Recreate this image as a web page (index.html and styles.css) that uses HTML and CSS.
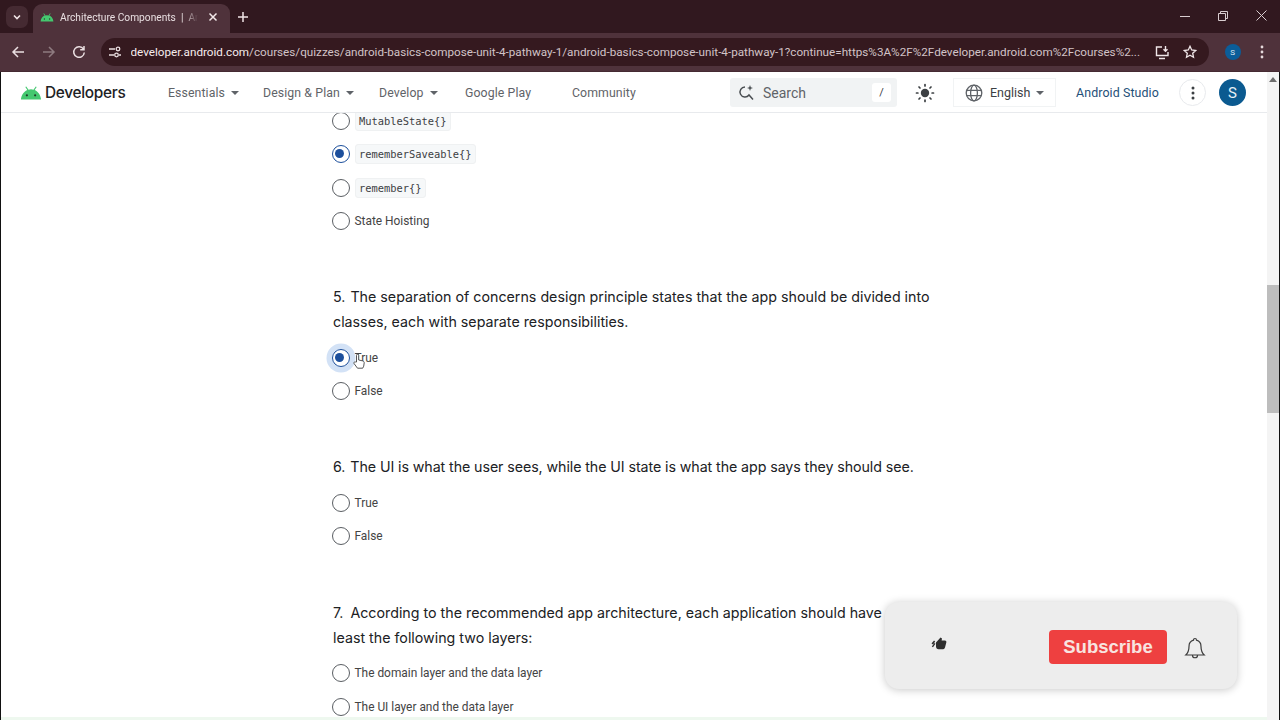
FILE: index.html
```html
<!DOCTYPE html>
<html lang="en">
<head>
<meta charset="utf-8">
<title>Architecture Components | Android Developers</title>
<link rel="stylesheet" href="styles.css">
</head>
<body>
<div class="tabstrip">
  <div class="tabsearch"><svg width="10" height="10" viewBox="0 0 10 10"><path d="M2 3.500 5 6.500 8 3.500" fill="none" stroke="#f0e4e6" stroke-width="1.600"/></svg></div>
  <div class="tab">
    <svg class="favicon" width="14" height="9" viewBox="0 0 24 15"><path d="M1 14.500C1.500 9 5 5.500 8 4.200L5.800 1l1-.6L9.300 4a8 8 0 0 1 5.400 0L17.200.4l1 .6L16 4.200C19 5.500 22.500 9 23 14.500Z" fill="#44c86f"/><circle cx="7.500" cy="10" r="1.200" fill="#2c3a30"/><circle cx="16.500" cy="10" r="1.200" fill="#2c3a30"/></svg>
    <span class="tabtitle">Architecture Components&nbsp; |&nbsp; An</span>
    <svg class="tabclose" width="10" height="10" viewBox="0 0 10 10"><path d="M1.500 1.500l7 7M8.500 1.500l-7 7" stroke="#f3e9ea" stroke-width="1.500"/></svg>
  </div>
  <svg class="newtab" width="12" height="12" viewBox="0 0 12 12"><path d="M6 1v10M1 6h10" stroke="#f0e4e6" stroke-width="1.500"/></svg>
  <div class="winctl">
    <svg width="10" height="10" viewBox="0 0 10 10"><path d="M0 5.500h10" stroke="#d9cdd0" stroke-width="1"/></svg>
    <svg width="10" height="10" viewBox="0 0 10 10"><path d="M.5 2.500h7v7h-7zM2.500 2.500V.5h7v7h-2" fill="none" stroke="#d9cdd0"/></svg>
    <svg width="11" height="11" viewBox="0 0 11 11"><path d="M.5.5l10 10M10.500.5l-10 10" stroke="#d9cdd0"/></svg>
  </div>
</div>
<div class="toolbar">
  <svg class="navicon" width="14" height="14" viewBox="0 0 14 14"><path d="M13 7H2M7 2 2 7l5 5" fill="none" stroke="#eadfe1" stroke-width="1.500"/></svg>
  <svg class="navicon" width="14" height="14" viewBox="0 0 14 14"><path d="M1 7h11M7 2l5 5-5 5" fill="none" stroke="#8f7b80" stroke-width="1.500"/></svg>
  <svg class="navicon" width="14" height="14" viewBox="0 0 14 14"><path d="M11.500 4.200A5.300 5.300 0 1 0 12.300 7.500M12 1v3.800H8.200" fill="none" stroke="#eadfe1" stroke-width="1.500"/></svg>
  <div class="omnibox">
    <svg class="tune" width="14" height="14" viewBox="0 0 14 14"><path d="M1 4h6M11 10h2M1 10h5" stroke="#eadfe1" stroke-width="1.300"/><circle cx="10" cy="4" r="1.800" fill="none" stroke="#eadfe1" stroke-width="1.300"/><circle cx="8.500" cy="10" r="1.800" fill="none" stroke="#eadfe1" stroke-width="1.300"/></svg>
    <span class="url"><span class="host">developer.android.com</span>/courses/quizzes/android-basics-compose-unit-4-pathway-1/android-basics-compose-unit-4-pathway-1?continue=https%3A%2F%2Fdeveloper.android.com%2Fcourses%2...</span>
    <svg class="omniicon" width="16" height="15" viewBox="0 0 16 15"><path d="M7 2H1.500v8.500h11.500V7M4 13.500h6" fill="none" stroke="#f0e6e8" stroke-width="1.400"/><path d="M10.500 1v5M8.500 4.200l2 2 2-2" fill="none" stroke="#f0e6e8" stroke-width="1.400"/></svg>
    <svg class="omniicon star" width="14" height="14" viewBox="0 0 14 14"><path d="M7 1.300l1.700 3.700 4 .5-3 2.700.8 4L7 10.200 3.500 12.200l.8-4-3-2.700 4-.5Z" fill="none" stroke="#f0e6e8" stroke-width="1.300"/></svg>
  </div>
  <div class="profile-mini">S</div>
  <svg class="kebab-mini" width="4" height="14" viewBox="0 0 4 14"><circle cx="2" cy="2" r="1.400" fill="#e6dadc"/><circle cx="2" cy="7" r="1.400" fill="#e6dadc"/><circle cx="2" cy="12" r="1.400" fill="#e6dadc"/></svg>
</div>
<div class="viewport">
  <div class="page">
    <header class="sitehead">
      <div class="brand">
        <svg width="22" height="14" viewBox="0 0 24 15"><path d="M1 14.500C1.500 9 5 5.500 8 4.200L5.800 1l1-.6L9.300 4a8 8 0 0 1 5.400 0L17.200.4l1 .6L16 4.200C19 5.500 22.500 9 23 14.500Z" fill="#44c86f"/><circle cx="7.500" cy="10" r="1.200" fill="#1f3a2a"/><circle cx="16.500" cy="10" r="1.200" fill="#1f3a2a"/></svg>
        <span class="brandname">Developers</span>
      </div>
      <nav class="nav">
        <span class="navitem w1">Essentials<i class="caret"></i></span>
        <span class="navitem w2">Design &amp; Plan<i class="caret"></i></span>
        <span class="navitem w3">Develop<i class="caret"></i></span>
        <span class="navitem w4">Google Play</span>
        <span class="navitem">Community</span>
      </nav>
      <div class="searchbox">
        <svg width="18" height="18" viewBox="0 0 18 18"><path d="M8 3a5 5 0 1 0 4 8l4 4.500" fill="none" stroke="#4a4e52" stroke-width="1.500"/><path d="M13 1l.8 2.200L16 4l-2.200.8L13 7l-.8-2.200L10 4l2.200-.8Z" fill="#4a4e52"/></svg>
        <span class="searchlabel">Search</span>
        <span class="slash">/</span>
      </div>
      <svg class="sun" width="20" height="20" viewBox="0 0 20 20"><circle cx="10" cy="10" r="4.200" fill="#3c4043"/><g stroke="#3c4043" stroke-width="1.700" stroke-linecap="round"><path d="M10 1.500v1.400M10 17.100v1.400M1.500 10h1.400M17.100 10h1.400M4 4l1 1M15 15l1 1M4 16l1-1M15 5l1-1"/></g></svg>
      <div class="lang">
        <svg width="18" height="18" viewBox="0 0 18 18"><g fill="none" stroke="#5f6368" stroke-width="1.300"><circle cx="9" cy="9" r="7.800"/><ellipse cx="9" cy="9" rx="3.400" ry="7.800"/><path d="M1.800 6.300h14.400M1.800 11.700h14.400"/></g></svg>
        <span>English</span><i class="caret"></i>
      </div>
      <span class="studio">Android Studio</span>
      <div class="morebtn"><svg width="4" height="14" viewBox="0 0 4 14"><circle cx="2" cy="2" r="1.500" fill="#3c4043"/><circle cx="2" cy="7" r="1.500" fill="#3c4043"/><circle cx="2" cy="12" r="1.500" fill="#3c4043"/></svg></div>
      <div class="avatar">S</div>
    </header>
    <main class="quiz">
      <div class="options first">
        <label class="opt"><span class="radio"></span><code>MutableState{}</code></label>
        <label class="opt"><span class="radio on"></span><code>rememberSaveable{}</code></label>
        <label class="opt"><span class="radio"></span><code>remember{}</code></label>
        <label class="opt"><span class="radio"></span>State Hoisting</label>
      </div>
      <section class="question">
        <p class="qtext"><span class="qnum">5.</span>The separation of concerns design principle states that the app should be divided into classes, each with separate responsibilities.</p>
        <div class="options">
          <label class="opt cursor-opt"><span class="radio on halo"></span>True
            <svg class="cursor" width="12" height="16" viewBox="0 0 12 16"><path d="M3.500 9V2.300a1.100 1.100 0 0 1 2.200 0V7l4 .9c1 .3 1.600 1 1.500 2l-.5 3.300-1 2H4.500L1 10.500c-.6-.9.8-2.200 1.600-1.500Z" fill="#fff" stroke="#444" stroke-width=".9"/></svg>
          </label>
          <label class="opt"><span class="radio"></span>False</label>
        </div>
      </section>
      <section class="question">
        <p class="qtext tight"><span class="qnum">6.</span>The UI is what the user sees, while the UI state is what the app says they should see.</p>
        <div class="options">
          <label class="opt"><span class="radio"></span>True</label>
          <label class="opt"><span class="radio"></span>False</label>
        </div>
      </section>
      <section class="question">
        <p class="qtext"><span class="qnum wide">7.</span>According to the recommended app architecture, each application should have at<br>least the following two layers:</p>
        <div class="options">
          <label class="opt"><span class="radio"></span>The domain layer and the data layer</label>
          <label class="opt"><span class="radio"></span>The UI layer and the data layer</label>
        </div>
      </section>
    </main>
    <div class="bottomtint"></div>
  </div>
  <aside class="scrollbar">
    <svg class="uparrow" width="8" height="5" viewBox="0 0 8 5"><path d="M4 0l4 5H0Z" fill="#6d6d6d"/></svg>
    <div class="thumb"></div>
  </aside>
</div>
<div class="subcard">
  <svg class="thumbicon" width="16" height="13" viewBox="0 0 16 13"><path d="M5 5.500 9.500.5l1.500 1-.4 2H14c1 0 1.700 1 1.300 2l-1.300 5c-.3.800-1 1.700-1.800 1.700H7.500C6 12.200 5 11 5 9.500Z" fill="#2e2e2e"/><path d="M.5 6.500 3 3.500l1.200 1L2 7.500ZM.8 9.500 3.500 6l1 .8L2 10.300Z" fill="#2e2e2e"/></svg>
  <span class="subscribe">Subscribe</span>
  <svg class="bell" width="22" height="24" viewBox="0 0 22 24"><path d="M11 1.500c.9 0 1.500.6 1.500 1.700 3 .8 4.500 3.200 4.500 6.300 0 4 .8 6.200 3.200 8.500H1.800C4.200 15.700 5 13.500 5 9.500c0-3.100 1.500-5.500 4.500-6.300 0-1.100.6-1.700 1.500-1.700Z M8.500 18.500c0 3 5 3 5 0" fill="none" stroke="#3c3c3c" stroke-width="1.200"/></svg>
</div>
</body>
</html>
```
FILE: styles.css
```css
* { box-sizing: border-box; }
html, body { margin: 0; height: 720px; overflow: hidden; }
body {
  width: 1280px;
  display: flex;
  flex-direction: column;
  position: relative;
  font-family: "Roboto", "Liberation Sans", sans-serif;
  background: #fff;
}
.tabstrip {
  height: 33px;
  flex: none;
  background: #31181f;
  display: flex;
  align-items: center;
  padding: 0 0 0 6px;
}
.tabsearch {
  width: 22px; height: 22px;
  border-radius: 7px;
  background: #452a32;
  display: flex; align-items: center; justify-content: center;
  margin-right: 5px;
}
.tab {
  width: 197px; height: 29px;
  margin-top: 4px;
  background: #4f323b;
  border-radius: 9px 9px 0 0;
  display: flex; align-items: center;
  padding: 0 0 3px 7px;
}
.favicon { flex: none; margin-right: 6px; }
.tabtitle {
  width: 138px;
  flex: none;
  font-size: 10.200px;
  color: #e9dfe1;
  white-space: nowrap;
  overflow: hidden;
  -webkit-mask-image: linear-gradient(90deg, #000 90%, transparent);
  mask-image: linear-gradient(90deg, #000 90%, transparent);
}
.tabclose { margin-left: 10px; flex: none; }
.newtab { margin-left: 7px; }
.winctl {
  margin-left: auto;
  width: 100px;
  padding: 0 13.500px 0 0;
  display: flex; align-items: center; justify-content: space-between;
  transform: translateY(-1px);
}
.toolbar {
  height: 39px;
  flex: none;
  background: #4f323b;
  border-bottom: 1px solid #452a32;
  display: flex;
  align-items: center;
  padding: 0 0 0 11px;
}
.navicon { margin-right: 16.500px; flex: none; }
.omnibox {
  width: 1108px; height: 28px;
  flex: none;
  margin-left: -2px;
  border-radius: 14px;
  background: #35191f;
  display: flex; align-items: center;
  padding: 0 0 0 7px;
}
.tune { flex: none; margin-right: 9px; }
.url {
  width: 1014px;
  flex: none;
  font-size: 11.700px;
  color: #d2c3c7;
  white-space: nowrap;
  overflow: hidden;
}
.host { color: #f5eced; }
.omniicon { flex: none; margin-left: 10px; margin-right: 0; }
.omniicon.star { margin-left: 12px; }
.profile-mini {
  width: 16px; height: 16px;
  flex: none;
  margin-left: 16px;
  border-radius: 50%;
  background: #0b5d99;
  color: #dfeaf3;
  font-size: 8px;
  display: flex; align-items: center; justify-content: center;
}
.kebab-mini { margin-left: 19px; flex: none; }
.viewport {
  flex: 1;
  min-height: 0;
  display: flex;
  border-left: 1px solid #111;
  border-right: 1px solid #111;
}
.page {
  flex: 1;
  min-width: 0;
  display: flex;
  flex-direction: column;
  overflow: hidden;
  position: relative;
}
.sitehead {
  flex: none;
  height: 41px;
  display: flex;
  align-items: center;
  padding: 1px 21px 0 19px;
  background: #fff;
  border-bottom: 1px solid #e8eaed;
  position: relative;
  z-index: 2;
}
.brand { display: flex; align-items: center; gap: 3px; width: 148px; }
.brandname { font-size: 15.400px; letter-spacing: -.3px; color: #202124; font-family: "Inter", sans-serif; font-weight: 500; }
.nav { display: flex; align-items: center; font-size: 12.300px; color: #5f6368; letter-spacing: .1px; width: 562px; }
.navitem { display: flex; align-items: center; white-space: nowrap; }
.w1 { width: 95px; }
.w2 { width: 116px; }
.w3 { width: 86px; }
.w4 { width: 107px; }
.caret {
  display: inline-block;
  width: 0; height: 0;
  margin-left: 6px;
  border-left: 4px solid transparent;
  border-right: 4px solid transparent;
  border-top: 4.500px solid #5f6368;
}
.searchbox {
  width: 167px; height: 29px;
  background: #f1f3f4;
  border-radius: 3px;
  display: flex; align-items: center;
  padding: 0 6px 0 7px;
  font-size: 14px;
  color: #5f6368;
}
.searchlabel { margin-left: 8px; flex: 1; }
.slash {
  width: 19px; height: 19px;
  background: #fff;
  border-radius: 3px;
  font-size: 11px;
  display: flex; align-items: center; justify-content: center;
  color: #3c4043;
}
.sun { margin-left: 18px; flex: none; }
.lang {
  margin-left: 18px;
  width: 103px; height: 29px;
  border: 1px solid #f1f3f4;
  display: flex; align-items: center;
  padding: 0 0 0 11px;
  gap: 7px;
  font-size: 12.500px;
  color: #3c4043;
}
.lang .caret { margin-left: -1px; }
.studio { margin-left: 20px; font-size: 12.400px; color: #1f5078; white-space: nowrap; letter-spacing: .1px; }
.morebtn {
  width: 27px; height: 27px;
  flex: none;
  margin-left: auto;
  border: 1px solid #e8eaed;
  border-radius: 50%;
  display: flex; align-items: center; justify-content: center;
}
.avatar {
  width: 27px; height: 27px;
  flex: none;
  margin-left: 13px;
  border-radius: 50%;
  background: #0b5a90;
  color: #e8f0f6;
  font-size: 15px;
  display: flex; align-items: center; justify-content: center;
}
.quiz {
  width: 610px;
  margin: -8.500px 0 0 332px;
  flex: none;
}
.options { display: flex; flex-direction: column; margin-left: -1.500px; }
.opt {
  height: 33.300px;
  display: flex;
  align-items: center;
  gap: 5px;
  font-size: 11.900px;
  color: #444;
  position: relative;
}
.radio {
  width: 18px; height: 18px;
  flex: none;
  border: 1.800px solid #5a5e63;
  border-radius: 50%;
  position: relative;
}
.radio.on { border-color: #1c4f9c; }
.radio.on::after {
  content: "";
  position: absolute;
  left: 2.700px; top: 2.700px;
  width: 9px; height: 9px;
  border-radius: 50%;
  background: #1c4f9c;
}
.radio.halo { box-shadow: 0 0 0 5.500px #d3e2f6; }
code {
  font-family: "DejaVu Sans Mono", "Liberation Mono", monospace;
  font-size: 10.400px;
  color: #3c4043;
  background: #f6f8f9;
  border-radius: 3px;
  padding: 3px 3.500px;
  border: 1px solid #eff1f2;
}
.cursor { position: absolute; left: 21px; top: 12px; }
.question { margin-top: 46.600px; }
.qnum { margin-right: 5px; }
.qnum.wide { margin-right: 7px; }
.qtext {
  margin: 0 0 7px 0;
  font-family: "Inter", "Roboto", sans-serif;
  font-size: 14.250px;
  line-height: 25px;
  color: #202124;
}
.qtext.tight { letter-spacing: -.09px; }
.bottomtint {
  position: absolute;
  left: 0; right: 0; bottom: 0;
  height: 3px;
  background: #eef8ef;
  z-index: 3;
}
.scrollbar {
  flex: none;
  width: 12px;
  background: #f4f4f4;
  display: flex;
  flex-direction: column;
  align-items: center;
  padding-top: 5px;
}
.uparrow { flex: none; }
.thumb {
  width: 12px; height: 128px;
  margin-top: 203px;
  background: #bdbdbd;
  flex: none;
}
.subcard {
  position: absolute;
  left: 885px; top: 602px;
  width: 352px; height: 87px;
  border-radius: 14px;
  background: #ededed;
  box-shadow: 0 1px 8px rgba(0,0,0,.22);
}
.thumbicon { position: absolute; left: 46px; top: 35px; }
.subscribe {
  position: absolute;
  left: 164px; top: 28px;
  width: 118px; height: 34px;
  background: #ee4040;
  border-radius: 4px;
  color: #f8e4e0;
  font-family: "Liberation Sans", sans-serif;
  font-weight: 700;
  font-size: 18.500px;
  display: flex; align-items: center; justify-content: center;
}
.bell { position: absolute; left: 299px; top: 35px; }
```
